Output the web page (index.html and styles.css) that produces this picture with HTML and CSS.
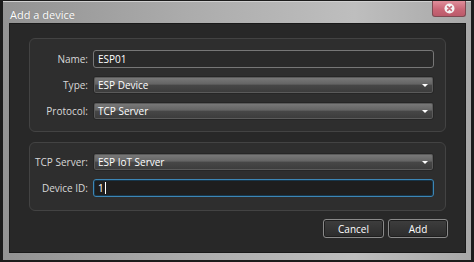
FILE: index.html
```html
<!DOCTYPE html>
<html>
<head>
<meta charset="utf-8">
<link rel="stylesheet" href="styles.css">
</head>
<body>
<div class="window">
  <div class="titlebar">
    <span class="title">Add a device</span>
    <div class="close">
      <svg width="11" height="11" viewBox="0 0 11 11"><circle cx="5.5" cy="5.5" r="5" fill="#f4f4f4"/><path d="M3.6 3.6 L7.4 7.4 M7.4 3.6 L3.6 7.4" stroke="#c56a78" stroke-width="1.6" stroke-linecap="round"/></svg>
    </div>
  </div>
  <div class="content">
    <div class="group g1">
      <div class="row"><label>Name:</label><div class="input">ESP01</div></div>
      <div class="row"><label>Type:</label><div class="select">ESP Device<span class="arrow"></span></div></div>
      <div class="row"><label>Protocol:</label><div class="select">TCP Server<span class="arrow"></span></div></div>
    </div>
    <div class="group g2">
      <div class="row"><label>TCP Server:</label><div class="select">ESP IoT Server<span class="arrow"></span></div></div>
      <div class="row"><label>Device ID:</label><div class="input focus">1<span class="caret"></span></div></div>
    </div>
    <div class="buttons">
      <div class="btn cancel">Cancel</div>
      <div class="btn add">Add</div>
    </div>
  </div>
</div>
</body>
</html>
```
FILE: styles.css
```css
html, body { margin: 0; padding: 0; }
body {
  width: 474px; height: 262px;
  background: #1c1c1c;
  font-family: "Open Sans", "Noto Sans", sans-serif;
  font-size: 10px;
  color: #f0f0f0;
  padding: 1px 3px 2px 3px;
  box-sizing: border-box;
}
.window {
  height: 259px;
  box-sizing: border-box;
  display: flex;
  flex-direction: column;
  background: linear-gradient(90deg, #939393 0%, #acacac 40%, #bebebe 75%, #a8a8a8 100%);
  border-top: 1px solid #d0d0d0;
  padding: 0 5px 7px 6px;
}
.titlebar {
  height: 21px;
  display: flex;
  align-items: flex-start;
  position: relative;
}
.title {
  color: #ffffff;
  font-size: 11px;
  padding-left: 1px;
  margin-top: 5px;
  text-shadow: 0 0 1px rgba(0,0,0,0.25);
}
.close {
  margin-left: auto;
  margin-top: -1px;
  width: 34px; height: 16px;
  box-sizing: border-box;
  background: linear-gradient(180deg, #e08f9b 0%, #c96676 55%, #bb5a6a 100%);
  border: 1px solid #7e4a52;
  border-top: none;
  border-radius: 0 0 3px 3px;
  display: flex; align-items: center; justify-content: center;
}
.content {
  flex: 1;
  background: #282828;
  border: 1px solid #1a1a1a;
  box-sizing: border-box;
  padding: 14px 19px 0 19px;
  display: flex;
  flex-direction: column;
}
.group {
  border: 1px solid #434343;
  border-radius: 6px;
  background: #2e2e2e;
  padding: 11px 11px 0 0;
  display: flex;
  flex-direction: column;
  gap: 8px;
  box-sizing: border-box;
}
.g1 { height: 94px; }
.g2 { height: 69px; margin-top: 10px; padding-top: 10px; }
.row {
  display: flex;
  align-items: center;
  height: 18px;
}
.row label {
  width: 63px;
  text-align: right;
  color: #d8d8d8;
  padding-right: 5px;
  box-sizing: border-box;
  flex: none;
}
.input, .select {
  flex: 1;
  height: 18px;
  box-sizing: border-box;
  border-radius: 3px;
  padding-left: 4px;
  display: flex;
  align-items: center;
  position: relative;
  color: #ffffff;
}
.input {
  background: #2a2a2a;
  border: 1px solid #777777;
}
.input.focus {
  background: #1e1e1e;
  border: 1px solid #3d86b5;
  box-shadow: inset 0 0 0 1px #17364a;
}
.select {
  background: linear-gradient(180deg, #7b7b7b 0%, #646464 45%, #474747 50%, #3b3b3b 100%);
  border: 1px solid #262626;
  box-shadow: inset 0 0 0 1px #5a5a5a;
}
.arrow {
  position: absolute;
  right: 5px; top: 7px;
  width: 0; height: 0;
  border-left: 3px solid transparent;
  border-right: 3px solid transparent;
  border-top: 3px solid #ffffff;
}
.caret {
  display: inline-block;
  width: 1px; height: 12px;
  background: #ffffff;
  margin-left: 1px;
}
.buttons {
  display: flex;
  justify-content: flex-end;
  gap: 4px;
  margin-top: 8px;
  margin-right: -2px;
}
.btn {
  height: 19px;
  box-sizing: border-box;
  border: 1px solid #8a8a8a;
  border-radius: 3px;
  background: linear-gradient(180deg, #3e3e3e 0%, #2c2c2c 100%);
  box-shadow: inset 0 0 0 1px #1e1e1e;
  display: flex; align-items: center; justify-content: center;
  color: #ffffff;
}
.cancel { width: 61px; }
.add { width: 60px; }
```
